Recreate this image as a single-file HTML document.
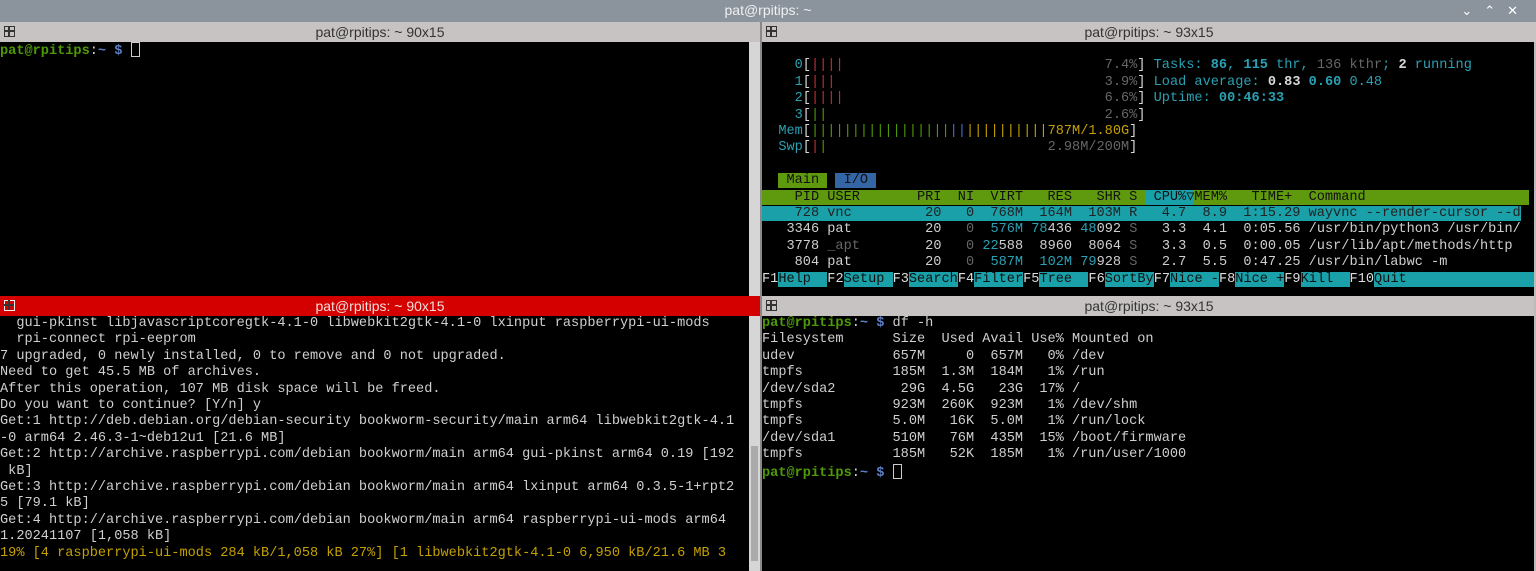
<!DOCTYPE html>
<html><head><meta charset="utf-8"><style>
*{margin:0;padding:0;box-sizing:border-box}
body{width:1536px;height:571px;overflow:hidden;background:#000;position:relative;font-family:"Liberation Sans",sans-serif}
.top{position:absolute;left:0;top:0;width:1536px;height:22px;background:#8b939c;color:#eef0f2;font-size:14px;text-align:center;line-height:21px}
.tb{position:absolute;height:20px;background:#c7c3c3;color:#333;font-size:14px;text-align:center;line-height:21px}
.tb.red{background:#d40000;color:#f4dede}
.ic{position:absolute;left:4px;top:4px;width:11px;height:11px;border:1.5px solid #333}
.ic:before{content:"";position:absolute;left:3px;top:-1px;width:1.5px;height:10px;background:#333}
.ic:after{content:"";position:absolute;left:-1px;top:3px;width:10px;height:1.5px;background:#333}
.pane{position:absolute;background:#000;overflow:hidden}
pre{position:absolute;left:0;top:0;font-family:"Liberation Mono",monospace;font-size:13.6px;line-height:16.4px;color:#cfcfcf;white-space:pre}
.g{color:#4e9a06;font-weight:bold}.b{color:#5c7fc4;font-weight:bold}
.c{color:#2aa1b3}.w{color:#d8d8d8}.r{color:#c4302b}.gr{color:#4e9a06}.bl{color:#4a6ed0}.y{color:#c4a000}.dk{color:#666}
.hdr{background:#5f9a0e;color:#111}
.sel{background:#1aa0a8;color:#222}
.fk{color:#ddd}.fl{background:#1aa0a8;color:#111}
.cur{display:inline-block;width:9px;height:15px;border:1px solid #ccc;vertical-align:-3px}
.sb{position:absolute;background:#d6d6d6}
</style></head><body>
<div class="top">pat@rpitips: ~<span style="position:absolute;right:6px;top:0;font-size:13px;color:#fff;letter-spacing:12px">⌄⌃✕</span></div>

<div class="tb" style="left:0;top:22px;width:760px"><div class="ic"></div>pat@rpitips: ~ 90x15</div>
<div class="tb" style="left:762px;top:22px;width:774px"><div class="ic"></div>pat@rpitips: ~ 93x15</div>
<div class="tb red" style="left:0;top:296px;width:760px"><div class="ic" style="border-color:#eee"></div>pat@rpitips: ~ 90x15</div>
<div class="tb" style="left:762px;top:296px;width:774px"><div class="ic"></div>pat@rpitips: ~ 93x15</div>
<div style="position:absolute;left:760px;top:22px;width:2px;height:549px;background:#888"></div>

<div class="pane" style="left:0;top:42px;width:749px;height:254px">
<pre><span class="g">pat@rpitips</span><span class="w">:</span><span class="b">~ $</span> <span class="cur"></span></pre></div>
<div class="sb" style="left:749px;top:42px;width:11px;height:254px"></div>

<div class="pane" style="left:762px;top:42px;width:772px;height:254px">
<pre>&nbsp;
<span class="c">    0</span><span class="w">[</span><span class="r">||||</span>                                <span class="dk">7.4%</span><span class="w">]</span> <span class="c">Tasks: </span><span class="c" style="font-weight:bold">86</span><span class="c">, </span><span class="c" style="font-weight:bold">115</span><span class="c"> thr, </span><span class="dk">136 kthr</span><span class="c">; </span><span class="w" style="font-weight:bold">2</span><span class="c"> running</span>
<span class="c">    1</span><span class="w">[</span><span class="r">|||</span>                                 <span class="dk">3.9%</span><span class="w">]</span> <span class="c">Load average: </span><span class="w" style="font-weight:bold">0.83 </span><span class="c" style="font-weight:bold">0.60 </span><span class="c">0.48</span>
<span class="c">    2</span><span class="w">[</span><span class="r">||||</span>                                <span class="dk">6.6%</span><span class="w">]</span> <span class="c">Uptime: </span><span class="c" style="font-weight:bold">00:46:33</span>
<span class="c">    3</span><span class="w">[</span><span class="gr">||</span>                                  <span class="dk">2.6%</span><span class="w">]</span>
<span class="c">  Mem</span><span class="w">[</span><span class="gr">|||||||||||||||||</span><span class="bl">||</span><span class="y">||||||||||</span><span class="y">787M/1.80G</span><span class="w">]</span>
<span class="c">  Swp</span><span class="w">[</span><span class="r">|</span><span class="gr">|</span>                           <span class="dk">2.98M/200M</span><span class="w">]</span>

  <span class="hdr"> Main </span> <span style="background:#3465a4;color:#111"> I/O </span>
<span class="hdr">    PID USER       PRI  NI  VIRT   RES   SHR S </span><span style="background:#1aa0a8;color:#111"> CPU%▽</span><span class="hdr">MEM%   TIME+  Command                    </span>
<span class="sel">    728 vnc         20   0  768M  164M  103M R   4.7  8.9  1:15.29 wayvnc --render-cursor --d</span>
   3346 pat         20   <span class="dk">0</span>  <span class="c">576M</span> <span class="c">78</span>436 <span class="c">48</span>092 <span class="dk">S</span>   3.3  4.1  0:05.56 /usr/bin/python3 /usr/bin/
   3778 <span class="dk">_apt</span>        20   <span class="dk">0</span> <span class="c">22</span>588  8960  8064 <span class="dk">S</span>   3.3  0.5  0:00.05 /usr/lib/apt/methods/http
    804 pat         20   <span class="dk">0</span>  <span class="c">587M</span>  <span class="c">102M</span> <span class="c">79</span>928 <span class="dk">S</span>   2.7  5.5  0:47.25 /usr/bin/labwc -m
<span class="fk">F1</span><span class="fl">Help  </span><span class="fk">F2</span><span class="fl">Setup </span><span class="fk">F3</span><span class="fl">Search</span><span class="fk">F4</span><span class="fl">Filter</span><span class="fk">F5</span><span class="fl">Tree  </span><span class="fk">F6</span><span class="fl">SortBy</span><span class="fk">F7</span><span class="fl">Nice -</span><span class="fk">F8</span><span class="fl">Nice +</span><span class="fk">F9</span><span class="fl">Kill  </span><span class="fk">F10</span><span class="fl">Quit                    </span></pre></div>
<div style="position:absolute;left:1534px;top:42px;width:2px;height:529px;background:#bbb"></div>

<div class="pane" style="left:0;top:316px;width:749px;height:255px">
<pre>  gui-pkinst libjavascriptcoregtk-4.1-0 libwebkit2gtk-4.1-0 lxinput raspberrypi-ui-mods
  rpi-connect rpi-eeprom
7 upgraded, 0 newly installed, 0 to remove and 0 not upgraded.
Need to get 45.5 MB of archives.
After this operation, 107 MB disk space will be freed.
Do you want to continue? [Y/n] y
Get:1 http://deb.debian.org/debian-security bookworm-security/main arm64 libwebkit2gtk-4.1
-0 arm64 2.46.3-1~deb12u1 [21.6 MB]
Get:2 http://archive.raspberrypi.com/debian bookworm/main arm64 gui-pkinst arm64 0.19 [192
 kB]
Get:3 http://archive.raspberrypi.com/debian bookworm/main arm64 lxinput arm64 0.3.5-1+rpt2
5 [79.1 kB]
Get:4 http://archive.raspberrypi.com/debian bookworm/main arm64 raspberrypi-ui-mods arm64
1.20241107 [1,058 kB]
<span class="y">19% [4 raspberrypi-ui-mods 284 kB/1,058 kB 27%] [1 libwebkit2gtk-4.1-0 6,950 kB/21.6 MB 3</span></pre></div>
<div class="sb" style="left:749px;top:316px;width:11px;height:255px"><div style="position:absolute;left:2px;top:130px;width:7px;height:115px;background:#aaa"></div></div>

<div class="pane" style="left:762px;top:316px;width:772px;height:255px">
<pre><span class="g">pat@rpitips</span><span class="w">:</span><span class="b">~ $</span> df -h
Filesystem      Size  Used Avail Use% Mounted on
udev            657M     0  657M   0% /dev
tmpfs           185M  1.3M  184M   1% /run
/dev/sda2        29G  4.5G   23G  17% /
tmpfs           923M  260K  923M   1% /dev/shm
tmpfs           5.0M   16K  5.0M   1% /run/lock
/dev/sda1       510M   76M  435M  15% /boot/firmware
tmpfs           185M   52K  185M   1% /run/user/1000
<span class="g">pat@rpitips</span><span class="w">:</span><span class="b">~ $</span> <span class="cur"></span></pre></div>
</body></html>
